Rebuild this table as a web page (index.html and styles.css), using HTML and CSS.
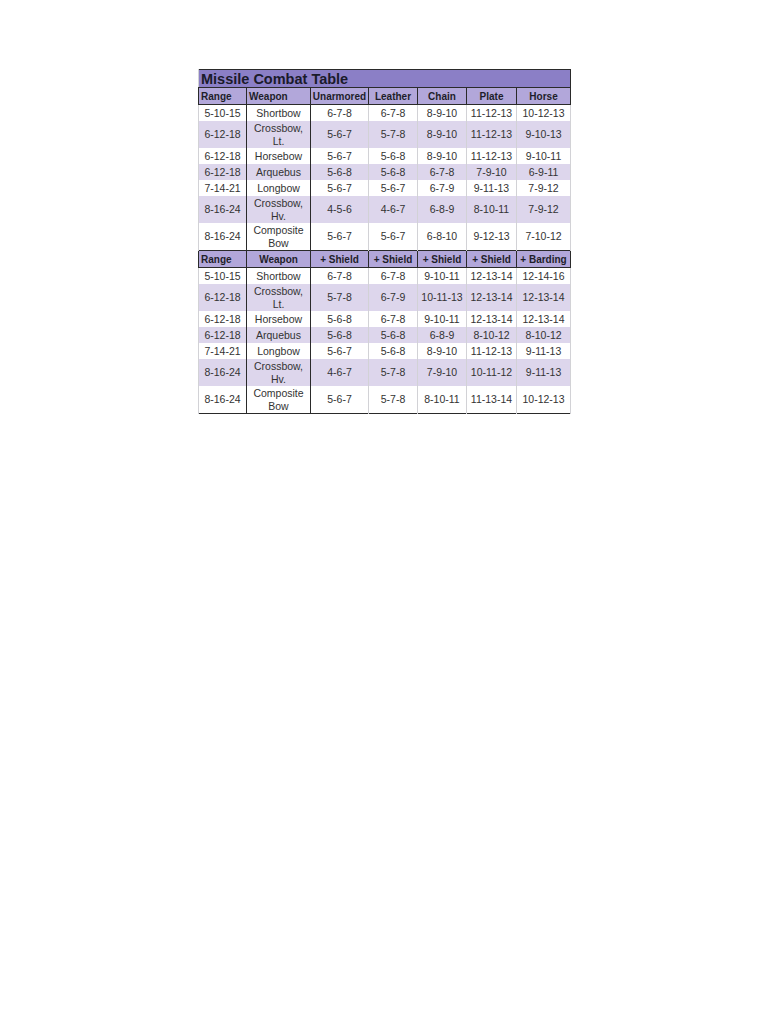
FILE: index.html
```html
<!DOCTYPE html>
<html>
<head>
<meta charset="utf-8">
<link rel="stylesheet" href="styles.css">
</head>
<body>
<div class="page">
<table class="mct">
<colgroup>
<col class="c-range"><col class="c-weapon"><col class="c-a"><col class="c-b"><col class="c-c"><col class="c-d"><col class="c-e">
</colgroup>
<tr class="title"><td colspan="7">Missile Combat Table</td></tr>
<tr class="hdr"><th class="left">Range</th><th class="left">Weapon</th><th>Unarmored</th><th>Leather</th><th>Chain</th><th>Plate</th><th>Horse</th></tr>
<tr class="s"><td>5-10-15</td><td class="w">Shortbow</td><td>6-7-8</td><td>6-7-8</td><td>8-9-10</td><td>11-12-13</td><td>10-12-13</td></tr>
<tr class="d alt"><td>6-12-18</td><td class="w">Crossbow,<br>Lt.</td><td>5-6-7</td><td>5-7-8</td><td>8-9-10</td><td>11-12-13</td><td>9-10-13</td></tr>
<tr class="s"><td>6-12-18</td><td class="w">Horsebow</td><td>5-6-7</td><td>5-6-8</td><td>8-9-10</td><td>11-12-13</td><td>9-10-11</td></tr>
<tr class="s alt"><td>6-12-18</td><td class="w">Arquebus</td><td>5-6-8</td><td>5-6-8</td><td>6-7-8</td><td>7-9-10</td><td>6-9-11</td></tr>
<tr class="s"><td>7-14-21</td><td class="w">Longbow</td><td>5-6-7</td><td>5-6-7</td><td>6-7-9</td><td>9-11-13</td><td>7-9-12</td></tr>
<tr class="d alt"><td>8-16-24</td><td class="w">Crossbow,<br>Hv.</td><td>4-5-6</td><td>4-6-7</td><td>6-8-9</td><td>8-10-11</td><td>7-9-12</td></tr>
<tr class="d"><td>8-16-24</td><td class="w">Composite<br>Bow</td><td>5-6-7</td><td>5-6-7</td><td>6-8-10</td><td>9-12-13</td><td>7-10-12</td></tr>
<tr class="hdr h2"><th class="left">Range</th><th>Weapon</th><th>+ Shield</th><th>+ Shield</th><th>+ Shield</th><th>+ Shield</th><th>+ Barding</th></tr>
<tr class="s"><td>5-10-15</td><td class="w">Shortbow</td><td>6-7-8</td><td>6-7-8</td><td>9-10-11</td><td>12-13-14</td><td>12-14-16</td></tr>
<tr class="d alt"><td>6-12-18</td><td class="w">Crossbow,<br>Lt.</td><td>5-7-8</td><td>6-7-9</td><td>10-11-13</td><td>12-13-14</td><td>12-13-14</td></tr>
<tr class="s"><td>6-12-18</td><td class="w">Horsebow</td><td>5-6-8</td><td>6-7-8</td><td>9-10-11</td><td>12-13-14</td><td>12-13-14</td></tr>
<tr class="s alt"><td>6-12-18</td><td class="w">Arquebus</td><td>5-6-8</td><td>5-6-8</td><td>6-8-9</td><td>8-10-12</td><td>8-10-12</td></tr>
<tr class="s"><td>7-14-21</td><td class="w">Longbow</td><td>5-6-7</td><td>5-6-8</td><td>8-9-10</td><td>11-12-13</td><td>9-11-13</td></tr>
<tr class="d alt"><td>8-16-24</td><td class="w">Crossbow,<br>Hv.</td><td>4-6-7</td><td>5-7-8</td><td>7-9-10</td><td>10-11-12</td><td>9-11-13</td></tr>
<tr class="d"><td>8-16-24</td><td class="w">Composite<br>Bow</td><td>5-6-7</td><td>5-7-8</td><td>8-10-11</td><td>11-13-14</td><td>10-12-13</td></tr>
</table>
</div>
</body>
</html>
```
FILE: styles.css
```css
html, body {
  margin: 0;
  padding: 0;
  background: #ffffff;
}
.page {
  padding: 69px 0 0 198px;
}
.mct {
  border-collapse: collapse;
  table-layout: fixed;
  width: 373px;
  border: 1px solid #2a2a2a;
  font-family: "Liberation Sans", Arial, sans-serif;
  font-size: 10.5px;
  color: #333333;
}
.c-range { width: 48px; }
.c-weapon { width: 64px; }
.c-a { width: 58px; }
.c-b { width: 49px; }
.c-c { width: 49px; }
.c-d { width: 50px; }
.c-e { width: 54px; }
.mct td, .mct th {
  padding: 0 1px;
  text-align: center;
  vertical-align: middle;
  line-height: 13px;
  border-left: 1px solid #d2d2d6;
  border-right: 1px solid #d2d2d6;
  white-space: nowrap;
}
.mct td:nth-child(1), .mct td:nth-child(2) {
  border-right: 1px solid #2a2a2a;
}
.mct tr.title td {
  background: #8b7fc6;
  color: #1a1a2a;
  font-weight: bold;
  font-size: 14.5px;
  line-height: 16px;
  text-align: left;
  padding: 0 2px;
  height: 17px;
  border-bottom: 1px solid #2a2a2a;
}
.mct tr.hdr th {
  background: #b2a7da;
  color: #1e1e2a;
  font-weight: bold;
  font-size: 10px;
  height: 16px;
  border: 1px solid #2a2a2a;
}
.mct tr.hdr th.left {
  text-align: left;
  padding-left: 2px;
}
.mct tr.s td { height: 16px; }
.mct tr.d td { height: 27px; }
.mct tr.alt td { background: #ddd6ec; }
```
